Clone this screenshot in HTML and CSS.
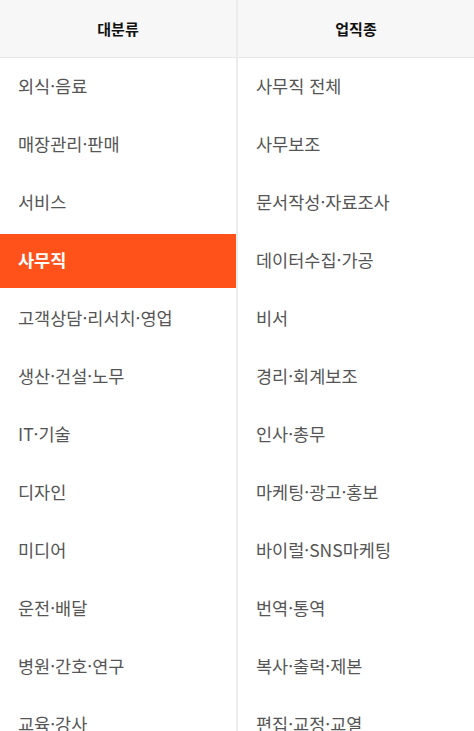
FILE: index.html
```html
<!DOCTYPE html>
<html lang="ko">
<head>
    <meta charset="UTF-8">
    <meta name="viewport" content="width=device-width, initial-scale=1.0">
    <title>업직종 선택</title>
    <link rel="stylesheet" href="styles.css">
</head>
<body>
    <div class="picker">
        <div class="column">
            <div class="column-head">대분류</div>
            <ul class="list">
                <li class="item">외식·음료</li>
                <li class="item">매장관리·판매</li>
                <li class="item">서비스</li>
                <li class="item selected">사무직</li>
                <li class="item">고객상담·리서치·영업</li>
                <li class="item">생산·건설·노무</li>
                <li class="item">IT·기술</li>
                <li class="item">디자인</li>
                <li class="item">미디어</li>
                <li class="item">운전·배달</li>
                <li class="item">병원·간호·연구</li>
                <li class="item">교육·강사</li>
            </ul>
        </div>
        <div class="column">
            <div class="column-head">업직종</div>
            <ul class="list">
                <li class="item">사무직 전체</li>
                <li class="item">사무보조</li>
                <li class="item">문서작성·자료조사</li>
                <li class="item">데이터수집·가공</li>
                <li class="item">비서</li>
                <li class="item">경리·회계보조</li>
                <li class="item">인사·총무</li>
                <li class="item">마케팅·광고·홍보</li>
                <li class="item">바이럴·SNS마케팅</li>
                <li class="item">번역·통역</li>
                <li class="item">복사·출력·제본</li>
                <li class="item">편집·교정·교열</li>
            </ul>
        </div>
    </div>
</body>
</html>
```

FILE: styles.css
```css
html, body {
    margin: 0;
    padding: 0;
    background: #fff;
    font-family: "Noto Sans CJK KR", "Noto Sans", sans-serif;
}

.picker {
    display: grid;
    grid-template-columns: 236px 1fr;
    height: 731px;
    overflow: hidden;
}

.column + .column {
    border-left: 2px solid #ececec;
}

.column-head {
    height: 57px;
    display: flex;
    align-items: center;
    justify-content: center;
    background: #f7f7f7;
    border-bottom: 1px solid #e6e6e6;
    font-size: 15px;
    font-weight: 700;
    color: #111;
}

.list {
    list-style: none;
    margin: 0;
    padding: 0;
}

.item {
    box-sizing: border-box;
    height: 58px;
    display: flex;
    align-items: center;
    padding: 0 0 3px 18px;
    font-size: 17.5px;
    color: #555;
}

.item.selected {
    background: #ff521b;
    background-clip: padding-box;
    border-top: 2px solid transparent;
    border-bottom: 2px solid transparent;
    color: #fff;
    font-weight: 700;
}
```
